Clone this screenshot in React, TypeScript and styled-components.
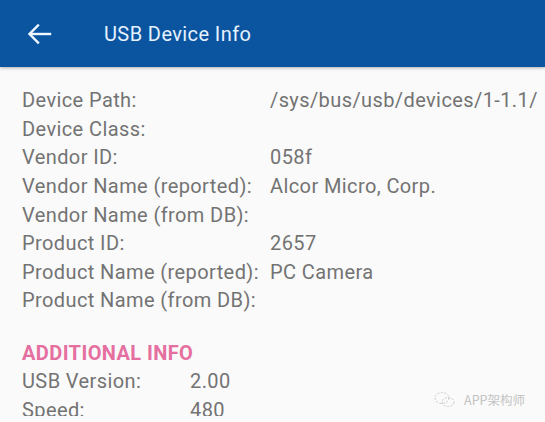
import React from "react";
import styled, { createGlobalStyle } from "styled-components";

const Global = createGlobalStyle`
  html, body { margin: 0; padding: 0; background: #fafafa; }
  body { font-family: Roboto, "Noto Sans", sans-serif; overflow: hidden; }
`;

const Screen = styled.div`
  width: 545px;
  height: 422px;
  overflow: hidden;
  background: #fafafa;
  position: relative;
  display: flex;
  flex-direction: column;
`;

const AppBar = styled.header`
  height: 67px;
  flex: none;
  background: #0b55a0;
  display: flex;
  align-items: center;
  box-shadow: 0 1px 3px rgba(0,0,0,0.3);
  position: relative;
  z-index: 1;
`;

const BackButton = styled.div`
  width: 104px;
  padding-left: 27px;
  box-sizing: border-box;
  display: flex;
  align-items: center;
`;

const Title = styled.h1`
  margin: 0;
  font-size: 20px;
  font-weight: 400;
  color: #e6f2ff;
  letter-spacing: 0.4px;
`;

const Content = styled.main`
  height: 349px;
  flex: none;
  overflow: hidden;
  padding: 19px 0 0 22px;
  box-sizing: border-box;
`;

const Table = styled.div<{ $labelWidth: number }>`
  display: grid;
  grid-template-columns: ${(p) => p.$labelWidth}px 1fr;
  grid-auto-rows: 28.6px;
  align-items: center;
  font-size: 20px;
  letter-spacing: 0.4px;
  color: #737373;
`;

const Cell = styled.div`
  white-space: nowrap;
`;

const SectionTitle = styled.h2`
  margin: 24px 0 0;
  height: 28px;
  display: flex;
  align-items: center;
  font-size: 20px;
  letter-spacing: 0.4px;
  font-weight: 700;
  color: #e56f9f;
`;

const Watermark = styled.div`
  position: absolute;
  right: 20px;
  bottom: 13px;
  display: flex;
  align-items: center;
  gap: 8px;
  color: #c4c4c4;
  font-size: 12.5px;
  font-family: "Noto Sans CJK SC", sans-serif;
`;

const main: [string, string][] = [
  ["Device Path:", "/sys/bus/usb/devices/1-1.1/"],
  ["Device Class:", ""],
  ["Vendor ID:", "058f"],
  ["Vendor Name (reported):", "Alcor Micro, Corp."],
  ["Vendor Name (from DB):", ""],
  ["Product ID:", "2657"],
  ["Product Name (reported):", "PC Camera"],
  ["Product Name (from DB):", ""],
];

const extra: [string, string][] = [
  ["USB Version:", "2.00"],
  ["Speed:", "480"],
];

export default function App() {
  return (
    <Screen>
      <Global />
      <AppBar>
        <BackButton>
          <svg width="25" height="22" viewBox="0 0 25 22" fill="none" stroke="#eef6ff" strokeWidth="2.4" strokeLinecap="square">
            <path d="M23 11H3.5" />
            <path d="M11 2.5L2.5 11L11 19.5" />
          </svg>
        </BackButton>
        <Title>USB Device Info</Title>
      </AppBar>
      <Content>
        <Table $labelWidth={248}>
          {main.map(([k, v]) => (
            <React.Fragment key={k}>
              <Cell>{k}</Cell>
              <Cell>{v}</Cell>
            </React.Fragment>
          ))}
        </Table>
        <SectionTitle>ADDITIONAL INFO</SectionTitle>
        <Table $labelWidth={168}>
          {extra.map(([k, v]) => (
            <React.Fragment key={k}>
              <Cell>{k}</Cell>
              <Cell>{v}</Cell>
            </React.Fragment>
          ))}
        </Table>
      </Content>
      <Watermark>
        <svg width="22" height="18" viewBox="0 0 22 18" fill="none" stroke="#c8c8c8" strokeWidth="1" strokeDasharray="2 1.5">
          <ellipse cx="8" cy="7" rx="7" ry="5.5" />
          <ellipse cx="14" cy="11" rx="6" ry="4.5" />
        </svg>
        <span>APP架构师</span>
      </Watermark>
    </Screen>
  );
}
